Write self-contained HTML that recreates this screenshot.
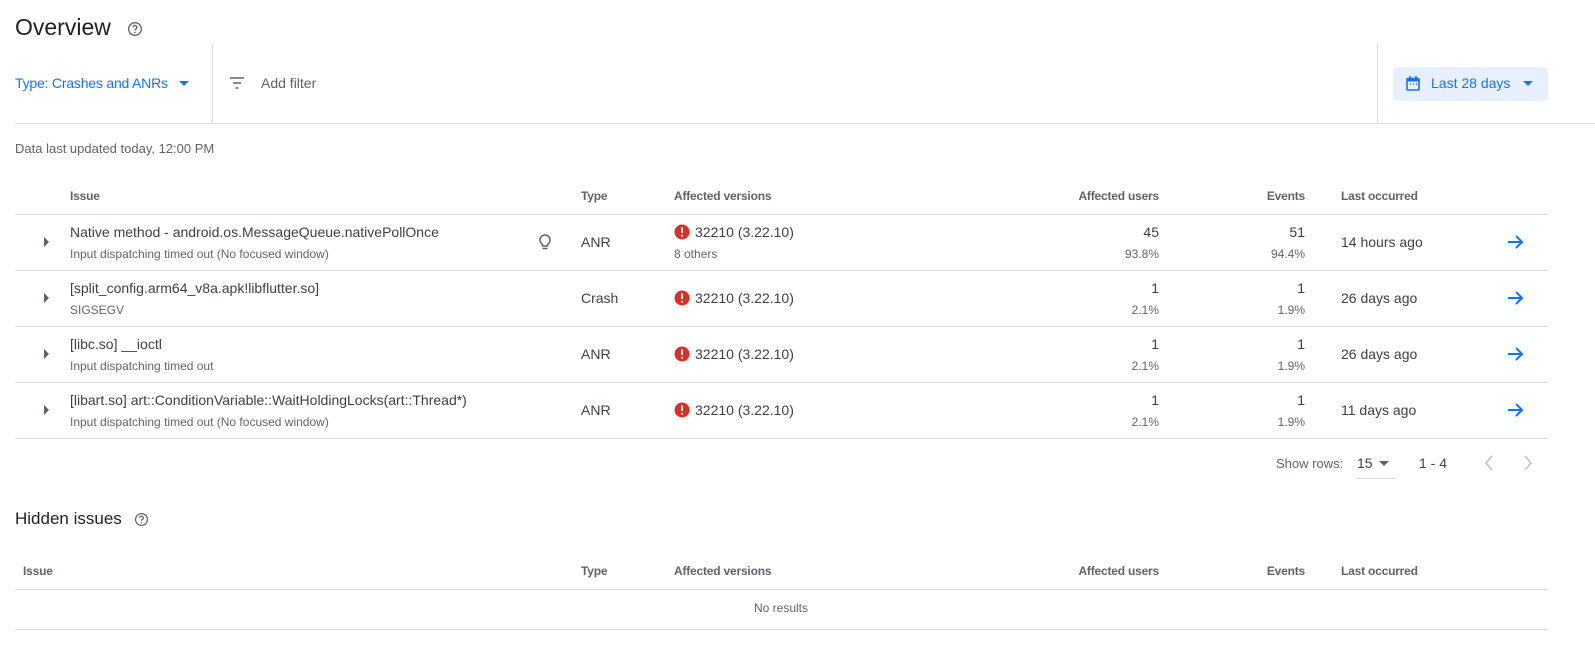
<!DOCTYPE html>
<html><head><meta charset="utf-8"><style>
*{margin:0;padding:0;box-sizing:border-box}
body{width:1595px;height:653px;background:#fff;font-family:"Liberation Sans",Arial,sans-serif;color:#3c4043;position:relative;overflow:hidden}
.a{position:absolute;white-space:nowrap}
.hl{position:absolute;height:1px;background:#dadce0}
.vl{position:absolute;width:1px;background:#dadce0}
.th{font-size:12px;color:#5f6368;font-weight:bold;letter-spacing:-0.2px}
.t1{font-size:14px;color:#3c4043}
.t2{font-size:12px;color:#5f6368}
.r{text-align:right}
</style></head><body>
<div class="a" style="left:15px;top:14px;font-size:23px;color:#202124">Overview</div>
<svg class="a" style="left:127px;top:21px" width="16" height="16" viewBox="0 0 24 24"><circle cx="12" cy="12" r="9.5" fill="none" stroke="#5f6368" stroke-width="2"/><path d="M9.2 9.5a2.8 2.8 0 1 1 4.2 2.4c-1 .6-1.4 1.1-1.4 2.3" fill="none" stroke="#5f6368" stroke-width="2"/><circle cx="12" cy="17.2" r="1.2" fill="#5f6368"/></svg>

<div class="vl" style="left:212px;top:44px;height:79px"></div>
<div class="vl" style="left:1377px;top:44px;height:79px"></div>
<div class="hl" style="left:15px;top:123px;width:1580px"></div>
<div class="a" style="left:15px;top:75px;font-size:14px;color:#1a73e8;letter-spacing:-0.2px">Type: Crashes and ANRs</div>
<svg class="a" style="left:178px;top:80px" width="12" height="8"><path d="M1 1h10L6 6z" fill="#1a73e8"/></svg>
<svg class="a" style="left:230px;top:77px" width="14" height="12"><path d="M0 1h14M3 6h8M5.5 11h3" stroke="#5f6368" stroke-width="1.6"/></svg>
<div class="a" style="left:261px;top:75px;font-size:14px;color:#5f6368">Add filter</div>
<div class="a" style="left:1393px;top:67px;width:155px;height:34px;background:#e8f0fe;border-radius:4px"></div>
<svg class="a" style="left:1406px;top:76px" width="14" height="15" viewBox="0 0 14 15"><rect x="1" y="2.5" width="12" height="11.5" rx="1" fill="none" stroke="#1a73e8" stroke-width="1.6"/><rect x="1" y="2.5" width="12" height="3" fill="#1a73e8"/><path d="M4 0v3M10 0v3" stroke="#1a73e8" stroke-width="1.6"/><path d="M4 8h1M7 8h1M10 8h1" stroke="#1a73e8" stroke-width="1.4"/></svg>
<div class="a" style="left:1431px;top:75px;font-size:14px;color:#1a73e8">Last 28 days</div>
<svg class="a" style="left:1522px;top:80px" width="12" height="8"><path d="M1 1h10L6 6z" fill="#1a73e8"/></svg>

<div class="a" style="left:15px;top:141px;font-size:13px;color:#5f6368">Data last updated today, 12:00 PM</div>

<div class="a th" style="left:70px;top:189px">Issue</div>
<div class="a th" style="left:581px;top:189px">Type</div>
<div class="a th" style="left:674px;top:189px">Affected versions</div>
<div class="a th r" style="right:436px;top:189px">Affected users</div>
<div class="a th r" style="right:290px;top:189px">Events</div>
<div class="a th" style="left:1341px;top:189px">Last occurred</div>
<div class="hl" style="left:15px;top:214px;width:1533px"></div>

<div class="hl" style="left:15px;top:270px;width:1533px"></div>
<div class="hl" style="left:15px;top:326px;width:1533px"></div>
<div class="hl" style="left:15px;top:382px;width:1533px"></div>
<div class="hl" style="left:15px;top:438px;width:1533px"></div>

<!-- row1 -->
<svg class="a" style="left:43px;top:237px" width="6" height="10"><path d="M1 0l5 5-5 5z" fill="#5f6368"/></svg>
<div class="a t1" style="left:70px;top:224px">Native method - android.os.MessageQueue.nativePollOnce</div>
<div class="a t2" style="left:70px;top:247px">Input dispatching timed out (No focused window)</div>
<svg class="a" style="left:539px;top:234px" width="12" height="16" viewBox="0 0 12 16"><path d="M3.5 10.5C2 9.5 1 8 1 6a5 5 0 0 1 10 0c0 2-1 3.5-2.5 4.5V12h-5z" fill="none" stroke="#5f6368" stroke-width="1.5"/><path d="M3.5 14.5h5" stroke="#5f6368" stroke-width="1.5"/></svg>
<div class="a t1" style="left:581px;top:234px">ANR</div>
<svg class="a" style="left:674px;top:224px" width="16" height="16"><circle cx="8" cy="8" r="7.5" fill="#d93025"/><path d="M8 3.5v5.5" stroke="#fff" stroke-width="2"/><circle cx="8" cy="11.8" r="1.1" fill="#fff"/></svg>
<div class="a t1" style="left:695px;top:224px">32210 (3.22.10)</div>
<div class="a t2" style="left:674px;top:247px">8 others</div>
<div class="a t1 r" style="right:436px;top:224px">45</div>
<div class="a t2 r" style="right:436px;top:247px">93.8%</div>
<div class="a t1 r" style="right:290px;top:224px">51</div>
<div class="a t2 r" style="right:290px;top:247px">94.4%</div>
<div class="a t1" style="left:1341px;top:234px">14 hours ago</div>
<svg class="a" style="left:1508px;top:235px" width="16" height="14"><path d="M0 7h14M8 1l6 6-6 6" fill="none" stroke="#1a73e8" stroke-width="2"/></svg>

<!-- row2 -->
<svg class="a" style="left:43px;top:293px" width="6" height="10"><path d="M1 0l5 5-5 5z" fill="#5f6368"/></svg>
<div class="a t1" style="left:70px;top:280px">[split_config.arm64_v8a.apk!libflutter.so]</div>
<div class="a t2" style="left:70px;top:303px">SIGSEGV</div>
<div class="a t1" style="left:581px;top:290px">Crash</div>
<svg class="a" style="left:674px;top:290px" width="16" height="16"><circle cx="8" cy="8" r="7.5" fill="#d93025"/><path d="M8 3.5v5.5" stroke="#fff" stroke-width="2"/><circle cx="8" cy="11.8" r="1.1" fill="#fff"/></svg>
<div class="a t1" style="left:695px;top:290px">32210 (3.22.10)</div>
<div class="a t1 r" style="right:436px;top:280px">1</div>
<div class="a t2 r" style="right:436px;top:303px">2.1%</div>
<div class="a t1 r" style="right:290px;top:280px">1</div>
<div class="a t2 r" style="right:290px;top:303px">1.9%</div>
<div class="a t1" style="left:1341px;top:290px">26 days ago</div>
<svg class="a" style="left:1508px;top:291px" width="16" height="14"><path d="M0 7h14M8 1l6 6-6 6" fill="none" stroke="#1a73e8" stroke-width="2"/></svg>

<!-- row3 -->
<svg class="a" style="left:43px;top:349px" width="6" height="10"><path d="M1 0l5 5-5 5z" fill="#5f6368"/></svg>
<div class="a t1" style="left:70px;top:336px">[libc.so] __ioctl</div>
<div class="a t2" style="left:70px;top:359px">Input dispatching timed out</div>
<div class="a t1" style="left:581px;top:346px">ANR</div>
<svg class="a" style="left:674px;top:346px" width="16" height="16"><circle cx="8" cy="8" r="7.5" fill="#d93025"/><path d="M8 3.5v5.5" stroke="#fff" stroke-width="2"/><circle cx="8" cy="11.8" r="1.1" fill="#fff"/></svg>
<div class="a t1" style="left:695px;top:346px">32210 (3.22.10)</div>
<div class="a t1 r" style="right:436px;top:336px">1</div>
<div class="a t2 r" style="right:436px;top:359px">2.1%</div>
<div class="a t1 r" style="right:290px;top:336px">1</div>
<div class="a t2 r" style="right:290px;top:359px">1.9%</div>
<div class="a t1" style="left:1341px;top:346px">26 days ago</div>
<svg class="a" style="left:1508px;top:347px" width="16" height="14"><path d="M0 7h14M8 1l6 6-6 6" fill="none" stroke="#1a73e8" stroke-width="2"/></svg>

<!-- row4 -->
<svg class="a" style="left:43px;top:405px" width="6" height="10"><path d="M1 0l5 5-5 5z" fill="#5f6368"/></svg>
<div class="a t1" style="left:70px;top:392px">[libart.so] art::ConditionVariable::WaitHoldingLocks(art::Thread*)</div>
<div class="a t2" style="left:70px;top:415px">Input dispatching timed out (No focused window)</div>
<div class="a t1" style="left:581px;top:402px">ANR</div>
<svg class="a" style="left:674px;top:402px" width="16" height="16"><circle cx="8" cy="8" r="7.5" fill="#d93025"/><path d="M8 3.5v5.5" stroke="#fff" stroke-width="2"/><circle cx="8" cy="11.8" r="1.1" fill="#fff"/></svg>
<div class="a t1" style="left:695px;top:402px">32210 (3.22.10)</div>
<div class="a t1 r" style="right:436px;top:392px">1</div>
<div class="a t2 r" style="right:436px;top:415px">2.1%</div>
<div class="a t1 r" style="right:290px;top:392px">1</div>
<div class="a t2 r" style="right:290px;top:415px">1.9%</div>
<div class="a t1" style="left:1341px;top:402px">11 days ago</div>
<svg class="a" style="left:1508px;top:403px" width="16" height="14"><path d="M0 7h14M8 1l6 6-6 6" fill="none" stroke="#1a73e8" stroke-width="2"/></svg>

<!-- pagination -->
<div class="a" style="left:1276px;top:456px;font-size:13px;color:#5f6368">Show rows:</div>
<div class="a" style="left:1357px;top:455px;font-size:14px;color:#3c4043">15</div>
<svg class="a" style="left:1378px;top:460px" width="12" height="7"><path d="M1 1h10L6 6z" fill="#5f6368"/></svg>
<div class="hl" style="left:1356px;top:478px;width:40px"></div>
<div class="a" style="left:1419px;top:455px;font-size:14px;color:#3c4043">1 - 4</div>
<svg class="a" style="left:1484px;top:455px" width="10" height="16"><path d="M8 1L2 8l6 7" fill="none" stroke="#bdc1c6" stroke-width="1.6"/></svg>
<svg class="a" style="left:1523px;top:455px" width="10" height="16"><path d="M2 1l6 7-6 7" fill="none" stroke="#bdc1c6" stroke-width="1.6"/></svg>

<!-- hidden -->
<div class="a" style="left:15px;top:509px;font-size:17px;color:#202124">Hidden issues</div>
<svg class="a" style="left:134px;top:512px" width="15" height="15" viewBox="0 0 24 24"><circle cx="12" cy="12" r="9.5" fill="none" stroke="#5f6368" stroke-width="2"/><path d="M9.2 9.5a2.8 2.8 0 1 1 4.2 2.4c-1 .6-1.4 1.1-1.4 2.3" fill="none" stroke="#5f6368" stroke-width="2"/><circle cx="12" cy="17.2" r="1.2" fill="#5f6368"/></svg>
<div class="a th" style="left:23px;top:564px">Issue</div>
<div class="a th" style="left:581px;top:564px">Type</div>
<div class="a th" style="left:674px;top:564px">Affected versions</div>
<div class="a th r" style="right:436px;top:564px">Affected users</div>
<div class="a th r" style="right:290px;top:564px">Events</div>
<div class="a th" style="left:1341px;top:564px">Last occurred</div>
<div class="hl" style="left:15px;top:589px;width:1533px"></div>
<div class="a t2" style="left:754px;top:601px">No results</div>
<div class="hl" style="left:15px;top:629px;width:1533px"></div>
</body></html>
